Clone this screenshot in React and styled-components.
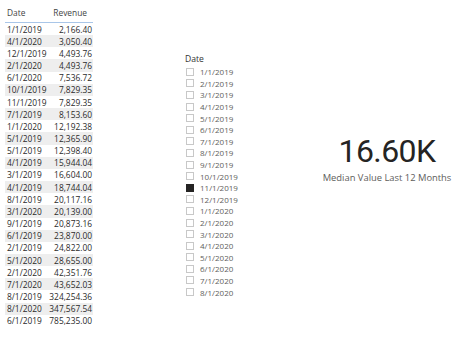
import React from "react";
import styled, { createGlobalStyle } from "styled-components";

const Global = createGlobalStyle`
  html, body { margin: 0; padding: 0; background: #fff; }
  body { width: 474px; height: 338px; overflow: hidden; font-family: "Open Sans", "Noto Sans", sans-serif; }
`;

const rows = [
  ["1/1/2019", "2,166.40"],
  ["4/1/2020", "3,050.40"],
  ["12/1/2019", "4,493.76"],
  ["2/1/2020", "4,493.76"],
  ["6/1/2020", "7,536.72"],
  ["10/1/2019", "7,829.35"],
  ["11/1/2019", "7,829.35"],
  ["7/1/2019", "8,153.60"],
  ["1/1/2020", "12,192.38"],
  ["5/1/2019", "12,365.90"],
  ["5/1/2019", "12,398.40"],
  ["4/1/2019", "15,944.04"],
  ["3/1/2019", "16,604.00"],
  ["4/1/2019", "18,744.04"],
  ["8/1/2019", "20,117.16"],
  ["3/1/2020", "20,139.00"],
  ["9/1/2019", "20,873.16"],
  ["6/1/2019", "23,870.00"],
  ["2/1/2019", "24,822.00"],
  ["5/1/2020", "28,655.00"],
  ["2/1/2020", "42,351.76"],
  ["7/1/2020", "43,652.03"],
  ["8/1/2019", "324,254.36"],
  ["8/1/2020", "347,567.54"],
  ["6/1/2019", "785,235.00"],
];

const dates = [
  "1/1/2019", "2/1/2019", "3/1/2019", "4/1/2019", "5/1/2019", "6/1/2019",
  "7/1/2019", "8/1/2019", "9/1/2019", "10/1/2019", "11/1/2019", "12/1/2019",
  "1/1/2020", "2/1/2020", "3/1/2020", "4/1/2020", "5/1/2020", "6/1/2020",
  "7/1/2020", "8/1/2020",
];

const Page = styled.div`
  display: flex;
  width: 474px;
  height: 338px;
`;

const Table = styled.div`
  margin-left: 5px;
  width: 88px;
  display: flex;
  flex-direction: column;
  font-size: 8.4px;
  color: #2b2b2b;
`;

const HeaderRow = styled.div`
  display: flex;
  justify-content: space-between;
  align-items: flex-end;
  height: 18px;
  padding: 0 1px 4px 2px;
  border-bottom: 1px solid #a9c6e8;
  color: #444;
`;

const HeaderCell = styled.span`
  margin-right: ${(p) => p.$mr || 0}px;
`;

const Row = styled.div`
  display: flex;
  justify-content: space-between;
  align-items: center;
  height: 12.17px;
  padding: 0 1px 0 2px;
  background: ${(p) => (p.$alt ? "#eeeeee" : "transparent")};
`;

const Slicer = styled.div`
  margin-left: 92px;
  margin-top: 53px;
  width: 115px;
  display: flex;
  flex-direction: column;
  font-size: 8px;
  color: #605e5c;
`;

const SlicerTitle = styled.div`
  color: #333;
  font-size: 8.6px;
  height: 13px;
  line-height: 13px;
`;

const List = styled.div`
  display: flex;
  flex-direction: column;
`;

const Item = styled.div`
  display: flex;
  align-items: center;
  height: 11.6px;
  gap: 6px;
  padding-left: 1px;
`;

const Box = styled.span`
  width: 8px;
  height: 8px;
  box-sizing: border-box;
  border: 1px solid ${(p) => (p.$on ? "#252423" : "#c8c8c8")};
  background: ${(p) => (p.$on ? "#252423" : "#fff")};
`;

const Card = styled.div`
  flex: 1;
  display: flex;
  flex-direction: column;
  align-items: center;
  padding-top: 132px;
`;

const Value = styled.div`
  font-family: Roboto, "Liberation Sans", sans-serif;
  font-size: 32px;
  line-height: 38px;
  letter-spacing: -0.6px;
  color: #252423;
`;

const Label = styled.div`
  font-size: 9.4px;
  color: #605e5c;
  margin-top: 1px;
`;

export default function App() {
  return (
    <>
      <Global />
      <Page>
        <Table>
          <HeaderRow>
            <HeaderCell>Date</HeaderCell>
            <HeaderCell $mr={5}>Revenue</HeaderCell>
          </HeaderRow>
          {rows.map(([d, v], i) => (
            <Row key={i} $alt={i % 2 === 1}>
              <span>{d}</span>
              <span>{v}</span>
            </Row>
          ))}
        </Table>
        <Slicer>
          <SlicerTitle>Date</SlicerTitle>
          <List>
            {dates.map((d) => (
              <Item key={d}>
                <Box $on={d === "11/1/2019"} />
                <span>{d}</span>
              </Item>
            ))}
          </List>
        </Slicer>
        <Card>
          <Value>16.60K</Value>
          <Label>Median Value Last 12 Months</Label>
        </Card>
      </Page>
    </>
  );
}
